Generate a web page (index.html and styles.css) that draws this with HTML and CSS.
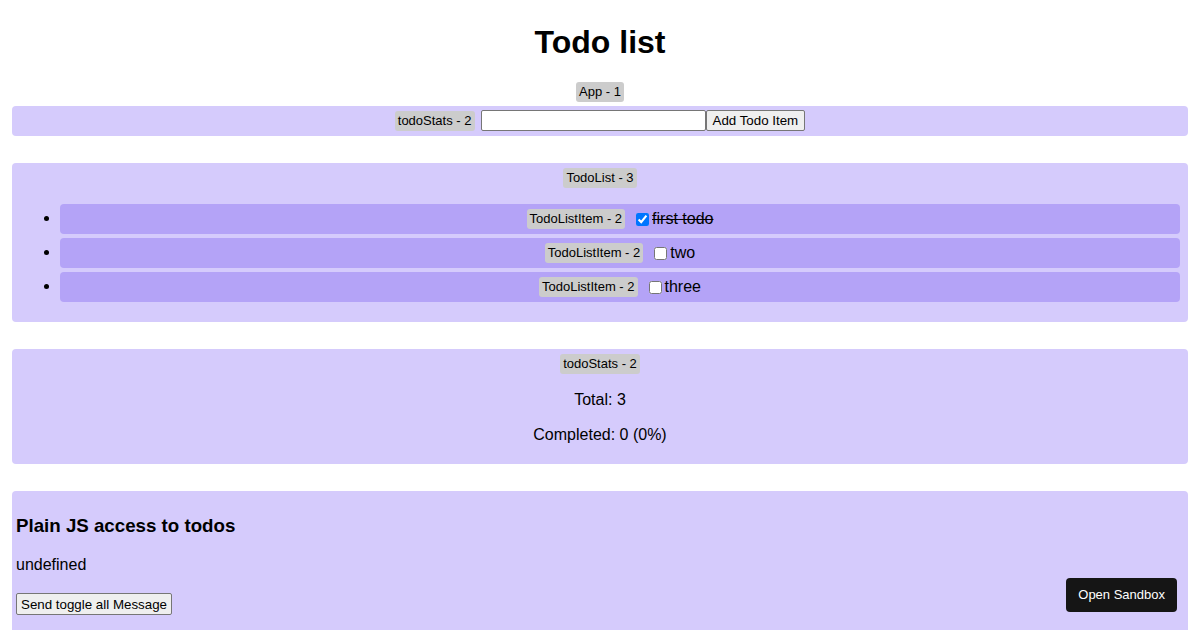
FILE: index.html
```html
<!DOCTYPE html>
<html>
<head>
<meta charset="utf-8">
<title>Todo list</title>
<link rel="stylesheet" href="styles.css">
</head>
<body>
<h1 class="title">Todo list</h1>
<div class="app">
  <div class="app-label"><span class="badge">App - 1</span></div>
  <div class="panel panel-form">
    <span class="badge badge-gap">todoStats - 2</span>
    <input class="todo-input" type="text">
    <button class="btn" type="button">Add Todo Item</button>
  </div>
  <div class="panel panel-list">
    <div class="center"><span class="badge">TodoList - 3</span></div>
    <ul class="todo-list">
      <li class="todo-item">
        <div class="todo-row">
          <span class="badge badge-item">TodoListItem - 2</span>
          <input class="check" type="checkbox" checked>
          <span class="todo-text done">first todo</span>
        </div>
      </li>
      <li class="todo-item">
        <div class="todo-row">
          <span class="badge badge-item">TodoListItem - 2</span>
          <input class="check" type="checkbox">
          <span class="todo-text">two</span>
        </div>
      </li>
      <li class="todo-item">
        <div class="todo-row">
          <span class="badge badge-item">TodoListItem - 2</span>
          <input class="check" type="checkbox">
          <span class="todo-text">three</span>
        </div>
      </li>
    </ul>
  </div>
  <div class="panel panel-stats">
    <div class="center"><span class="badge">todoStats - 2</span></div>
    <p class="stat">Total: 3</p>
    <p class="stat">Completed: 0 (0%)</p>
  </div>
  <div class="panel panel-js">
    <h3 class="js-title">Plain JS access to todos</h3>
    <p class="js-value">undefined</p>
    <div class="js-actions"><button class="btn btn-wide" type="button">Send toggle all Message</button></div>
  </div>
</div>
<a class="sandbox-btn" href="#">Open Sandbox</a>
</body>
</html>
```

FILE: styles.css
```css
html, body {
  margin: 0;
  padding: 0;
}
body {
  font-family: "Liberation Sans", Arial, sans-serif;
  font-size: 16px;
  color: #000;
  background: #fff;
  padding: 0 12px;
  overflow: hidden;
}
.title {
  font-size: 32px;
  font-weight: bold;
  text-align: center;
  margin: 24px 0 21px;
  line-height: 37px;
}
.app-label {
  text-align: center;
  margin-bottom: 4px;
  height: 20px;
}
.badge {
  display: inline-block;
  background: #cccccc;
  font-size: 13px;
  line-height: 16px;
  padding: 2px 3px;
  border-radius: 3px;
  vertical-align: top;
}
.badge-gap {
  margin-right: 6px;
}
.badge-item {
  margin-right: 7px;
}
.panel {
  background: #d5cbfc;
  border-radius: 4px;
  margin-bottom: 27px;
}
.panel-form {
  display: flex;
  justify-content: center;
  align-items: center;
  padding: 4px 8px 5px;
}
.todo-input {
  box-sizing: border-box;
  width: 225px;
  height: 21px;
  margin: 0;
  font-family: "Liberation Sans", Arial, sans-serif;
  font-size: 13.33px;
  border: 1px solid #767676;
  border-radius: 2px;
  padding: 1px 2px;
  background: #fff;
}
.btn {
  font-family: "Liberation Sans", Arial, sans-serif;
  font-size: 13.33px;
  margin: 0;
  padding: 1px 6px;
  height: 21px;
  border: 1px solid #767676;
  border-radius: 2px;
  background: #efefef;
  color: #000;
}
.btn-wide {
  padding: 1px 4px;
  height: 22px;
}
.panel-list {
  padding: 5px 8px 4px;
  overflow: hidden;
}
.center {
  text-align: center;
  height: 20px;
}
.todo-list {
  margin: 16px 0;
  padding-left: 40px;
  list-style: disc;
}
.todo-item {
  background: #b4a3f7;
  border-radius: 4px;
  margin-bottom: 4px;
}
.todo-row {
  display: flex;
  justify-content: center;
  align-items: center;
  padding: 5px;
  height: 20px;
}
.check {
  width: 13px;
  height: 13px;
  margin: 0 3px 0 4px;
}
.todo-text {
  font-size: 16px;
  line-height: 18px;
}
.done {
  text-decoration: line-through;
}
.panel-stats {
  text-align: center;
  padding: 5px 8px 4px;
  overflow: hidden;
}
.stat {
  margin: 16px 0;
  line-height: 19px;
}
.panel-js {
  padding: 4px;
  overflow: hidden;
  min-height: 160px;
}
.js-title {
  font-size: 18.72px;
  font-weight: bold;
  margin: 20px 0 19px;
  line-height: 22px;
}
.js-value {
  margin: 19px 0 19px;
  line-height: 18px;
}
.sandbox-btn {
  position: fixed;
  right: 23px;
  bottom: 18px;
  background: #151515;
  color: #fff;
  text-decoration: none;
  font-family: "Liberation Sans", Arial, sans-serif;
  font-size: 13px;
  line-height: 16px;
  padding: 9px 12px;
  border-radius: 4px;
}
```
